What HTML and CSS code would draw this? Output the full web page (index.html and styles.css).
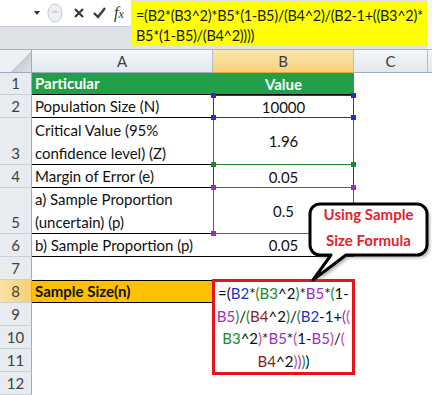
FILE: index.html
```html
<!DOCTYPE html>
<html>
<head>
<meta charset="utf-8">
<link rel="stylesheet" href="styles.css">
</head>
<body>
<div class="app">
  <div class="fbar">
    <div class="fb-left">
      <div class="fb-top">
        <div class="namebox"><span class="ddarrow"></span></div>
        <svg class="splitter" width="16" height="20" viewBox="0 0 16 20"><ellipse cx="8" cy="10" rx="7" ry="9" fill="#eef0f3" stroke="#c2c8d0"/><path d="M4.5 10 Q8 4 11.5 10 Z" fill="#cfd4da"/></svg>
        <svg class="ico-x" width="10" height="10" viewBox="0 0 10 10"><path d="M1 1 L9 9 M9 1 L1 9" stroke="#3a3a3a" stroke-width="2.2"/></svg>
        <svg class="ico-check" width="13" height="12" viewBox="0 0 13 12"><path d="M1 6 L5 10 L12 1" stroke="#3a3a3a" stroke-width="2.4" fill="none"/></svg>
        <span class="fx">f<span class="fx-x">x</span></span>
      </div>
    </div>
    <div class="fb-formula">=(B2*(B3^2)*B5*(1-B5)/(B4^2)/(B2-1+((B3^2)*<br>B5*(1-B5)/(B4^2))))</div>
    <div class="fb-right"></div>
  </div>

  <div class="sheet">
    <div class="corner"></div>
    <div class="ch">A</div>
    <div class="ch sel">B</div>
    <div class="ch">C</div>
    <div class="ch last"></div>

    <div class="rh">1</div>
    <div class="a green">Particular</div>
    <div class="bv green">Value</div>
    <div class="e"></div><div class="e"></div>

    <div class="rh">2</div>
    <div class="a">Population Size (N)</div>
    <div class="bv rng-b2">10000<i class="sq tl"></i><i class="sq tr"></i><i class="sq bl"></i><i class="sq br"></i></div>
    <div class="e"></div><div class="e"></div>

    <div class="rh">3</div>
    <div class="a">Critical Value (95%<br>confidence level) (Z)</div>
    <div class="bv rng-b3">1.96<i class="sq bl"></i><i class="sq br"></i></div>
    <div class="e"></div><div class="e"></div>

    <div class="rh">4</div>
    <div class="a">Margin of Error (e)</div>
    <div class="bv rng-b4">0.05</div>
    <div class="e"></div><div class="e"></div>

    <div class="rh">5</div>
    <div class="a">a) Sample Proportion<br>(uncertain) (p)</div>
    <div class="bv rng-b5">0.5<i class="sq tl"></i><i class="sq tr"></i><i class="sq bl"></i><i class="sq br"></i></div>
    <div class="e"></div><div class="e"></div>

    <div class="rh">6</div>
    <div class="a">b) Sample Proportion (p)</div>
    <div class="bv b6">0.05</div>
    <div class="e"></div><div class="e"></div>

    <div class="rh">7</div>
    <div class="e"></div><div class="e"></div><div class="e"></div><div class="e"></div>

    <div class="rh sel">8</div>
    <div class="a orange">Sample Size(n)</div>
    <div class="fcell">
      <span class="ln">=(<span class="c2">B2</span>*<span class="p2">(</span><span class="c3">B3</span>^2<span class="p2">)</span>*<span class="c5">B5</span>*<span class="p2">(</span>1-</span>
      <span class="ln"><span class="c5">B5</span><span class="p2">)</span>/<span class="p2">(</span><span class="c4">B4</span>^2<span class="p2">)</span>/<span class="p2">(</span><span class="c2">B2</span>-1+<span class="p3">(</span><span class="p4">(</span></span>
      <span class="ln"><span class="c3">B3</span>^2<span class="p4">)</span>*<span class="c5">B5</span>*<span class="p4">(</span>1-<span class="c5">B5</span><span class="p4">)</span>/<span class="p4">(</span></span>
      <span class="ln"><span class="c4">B4</span>^2<span class="p4">)</span><span class="p3">)</span><span class="p2">)</span>)</span>
    </div>
    <div class="e"></div><div class="e"></div>

    <div class="rh">9</div>
    <div class="e"></div><div class="e"></div><div class="e"></div>

    <div class="rh">10</div>
    <div class="e"></div><div class="e"></div><div class="e"></div>

    <div class="rh">11</div>
    <div class="e"></div><div class="e"></div><div class="e"></div>

    <div class="rh">12</div>
    <div class="e"></div><div class="e"></div><div class="e"></div><div class="e"></div>
  </div>

  <svg class="bubble" width="132" height="95" viewBox="0 0 132 95">
    <defs><filter id="blur" x="-20%" y="-20%" width="140%" height="140%"><feGaussianBlur stdDeviation="1.5"/></filter></defs>
    <path transform="translate(3,3)" filter="url(#blur)" fill="#8a8a8a" opacity="0.6" d="M20 9 H117 A10 10 0 0 1 127 19 V50 A10 10 0 0 1 117 60 H46 L13 85 L31 60 H20 A10 10 0 0 1 10 50 V19 A10 10 0 0 1 20 9 Z"/>
    <path fill="#fff" stroke="#000" stroke-width="3" stroke-linejoin="round" d="M20 9 H117 A10 10 0 0 1 127 19 V50 A10 10 0 0 1 117 60 H46 L13 85 L31 60 H20 A10 10 0 0 1 10 50 V19 A10 10 0 0 1 20 9 Z"/>
  </svg>
  <div class="bubble-text">Using Sample<br>Size Formula</div>
</div>
</body>
</html>
```

FILE: styles.css
```css
html, body {
  margin: 0;
  padding: 0;
}
body {
  width: 432px;
  height: 395px;
  overflow: hidden;
  font-family: Lato, "Open Sans", sans-serif;
}
.app {
  position: relative;
  width: 432px;
  height: 395px;
  background: #fff;
  overflow: hidden;
}

/* formula bar */
.fbar {
  display: flex;
  height: 50px;
  box-sizing: border-box;
  background: #dfe3e8;
  border-bottom: 1px solid #aab4c0;
}
.fb-left {
  width: 131px;
  display: flex;
  flex-direction: column;
}
.fb-top {
  height: 27px;
  background: #fff;
  display: flex;
  align-items: center;
  border-bottom: 1px solid #c9cfd7;
  box-sizing: border-box;
}
.namebox {
  width: 44px;
  display: flex;
  align-items: center;
}
.ddarrow {
  margin-left: 34px;
  width: 0;
  height: 0;
  border-top: 4px solid #333;
  border-left: 3px solid transparent;
  border-right: 3px solid transparent;
}
.splitter {
  margin-left: 3px;
}
.ico-x {
  margin-left: 11px;
}
.ico-check {
  margin-left: 9px;
}
.fx {
  margin-left: 8px;
  font-family: "Liberation Serif", serif;
  font-style: italic;
  font-size: 16px;
  color: #333;
  line-height: 1;
}
.fx-x {
  font-size: 12px;
}
.fb-formula {
  margin-top: 2px;
  width: 296px;
  height: 43px;
  box-sizing: border-box;
  background: #ffff00;
  padding: 4px 0 0 5px;
  font-size: 14.5px;
  letter-spacing: -0.3px;
  line-height: 20px;
  color: #1a1a1a;
  white-space: nowrap;
  overflow: hidden;
}
.fb-right {
  flex: 1;
  background: #f4f5f7;
}

/* sheet */
.sheet {
  display: grid;
  grid-template-columns: 32px 181px 141px 74px 4px;
  grid-template-rows: 23px 22px 23px 47px 23px 46px repeat(7, 23px);
  font-size: 15px;
  color: #111;
}
.corner {
  background: linear-gradient(135deg, #eef1f4 0%, #eef1f4 62%, #c7cdd5 62%, #dde2e8 100%);
  border-right: 1px solid #9eadbe;
  border-bottom: 1px solid #9eadbe;
  box-sizing: border-box;
}
.ch {
  background: linear-gradient(#f5f7f9, #e3e8ee);
  border-right: 1px solid #b3bdca;
  border-bottom: 1px solid #9eadbe;
  box-sizing: border-box;
  display: flex;
  align-items: center;
  justify-content: center;
  color: #3d3d3d;
}
.ch.sel {
  background: linear-gradient(#fbe6ad, #f8d27a);
  border-bottom-color: #e2a83e;
}
.ch.last {
  border-right: none;
}
.rh {
  background: #e8ecf1;
  border-right: 1px solid #9eadbe;
  border-bottom: 1px solid #c8d0da;
  box-sizing: border-box;
  display: flex;
  align-items: flex-end;
  justify-content: center;
  line-height: 22px;
  color: #404040;
}
.rh.sel {
  background: linear-gradient(90deg, #fbe3a4, #f7cf70);
  border-right-color: #e2a83e;
}
.a {
  padding-left: 3px;
  display: flex;
  align-items: flex-end;
  line-height: 22.5px;
  border-bottom: 1px solid #000;
  box-sizing: border-box;
  white-space: nowrap;
}
.green {
  background: #21a049;
  color: #fff;
  font-weight: bold;
}
.orange {
  background: #ffc000;
  font-weight: bold;
  border-top: 1px solid #000;
  color: #111;
}
.bv {
  position: relative;
  display: flex;
  align-items: center;
  justify-content: center;
  box-sizing: border-box;
}
.bv.green {
  border-bottom: 1px solid #000;
}
.rng-b2 {
  border: 1px solid #1f2fd8;
  color: #111;
}
.rng-b2 .sq { background: #1f2fd8; }
.rng-b3 {
  border: 1px solid #1c8a2c;
  border-top: none;
}
.rng-b3 .sq { background: #1c8a2c; }
.rng-b4 {
  border-left: 1px solid #8b1a1a;
  border-right: 1px solid #8b1a1a;
}
.rng-b5 {
  border: 1px solid #a327c4;
  margin-top: -1px;
}
.rng-b5 .sq { background: #a327c4; }
.b6 {
  border-bottom: 1px solid #000;
}
.sq {
  position: absolute;
  width: 5px;
  height: 5px;
  z-index: 2;
}
.sq.tl { left: -3px; top: -3px; }
.sq.tr { right: -3px; top: -3px; }
.sq.bl { left: -3px; bottom: -3px; }
.sq.br { right: -3px; bottom: -3px; }
.e {
  background: #fff;
}

/* merged formula cell */
.fcell {
  grid-column: 3;
  grid-row: 9 / span 4;
  margin: -1px -1px -3px -1px;
  border: 3px solid #e8141b;
  background: #fff;
  display: flex;
  flex-direction: column;
  align-items: center;
  font-size: 15px;
  line-height: 22.5px;
  color: #111;
  white-space: nowrap;
  position: relative;
  z-index: 1;
}
.c2 { color: #1f2fd0; }
.c3 { color: #1c8a2c; }
.c4 { color: #8b1c1c; }
.c5 { color: #a02bc4; }
.p2 { color: #1c8a2c; }
.p3 { color: #a02bc4; }
.p4 { color: #d2449c; }

/* callout */
.bubble {
  position: absolute;
  left: 300px;
  top: 195px;
  z-index: 5;
}
.bubble-text {
  position: absolute;
  left: 310px;
  top: 201px;
  width: 117px;
  height: 51px;
  z-index: 6;
  display: flex;
  align-items: center;
  justify-content: center;
  text-align: center;
  color: #e3232b;
  font-weight: bold;
  font-size: 15px;
  line-height: 26px;
}
```
